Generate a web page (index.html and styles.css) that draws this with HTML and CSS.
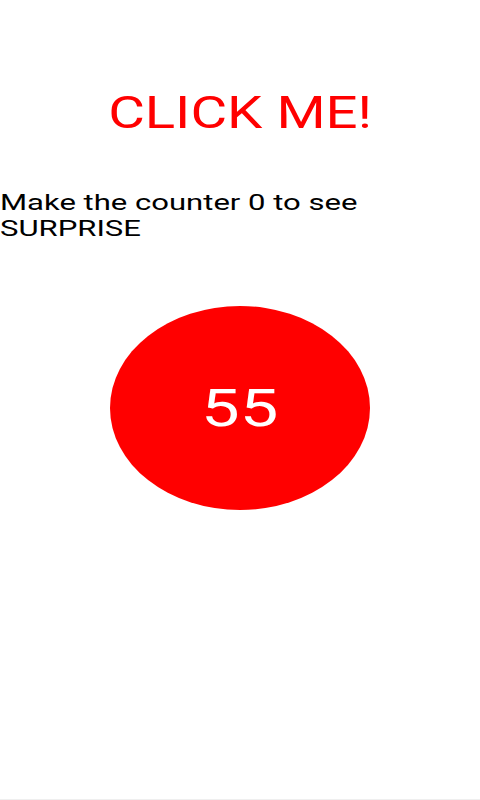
FILE: index.html
```html
<!DOCTYPE html>
<html>
<head>
<meta charset="utf-8">
<link rel="stylesheet" href="styles.css">
</head>
<body>
<div class="screen">
  <h1 class="title"><span class="title-text">CLICK ME!</span></h1>
  <p class="hint">Make the counter 0 to see SURPRISE</p>
  <div class="counter-wrap">
    <div class="counter"><span class="count">55</span></div>
  </div>
</div>
</body>
</html>
```
FILE: styles.css
```css
html, body {
  margin: 0;
  padding: 0;
  background: #ffffff;
}
.screen {
  width: 480px;
  height: 799px;
  border-bottom: 1px solid #efefef;
  display: flex;
  flex-direction: column;
  font-family: Roboto, "Liberation Sans", sans-serif;
}
.title {
  margin: 86px 0 0 0;
  text-align: center;
  color: #ff0000;
  font-weight: 400;
  font-size: 44px;
  line-height: 54px;
}
.title-text {
  display: inline-block;
  transform: scaleX(1.28);
  transform-origin: center;
}
.hint {
  margin: 49px 0 0 0;
  width: 268px;
  color: #000000;
  font-size: 22.5px;
  line-height: 26px;
  transform: scaleX(1.38);
  transform-origin: left top;
}
.counter-wrap {
  display: flex;
  justify-content: center;
  margin-top: 65px;
}
.counter {
  width: 260px;
  height: 204px;
  border-radius: 50%;
  background: #ff0000;
  color: #ffffff;
  font-size: 51px;
  line-height: 51px;
  display: flex;
  align-items: center;
  justify-content: center;
}
.count {
  display: inline-block;
  transform: scaleX(1.35);
}
```
